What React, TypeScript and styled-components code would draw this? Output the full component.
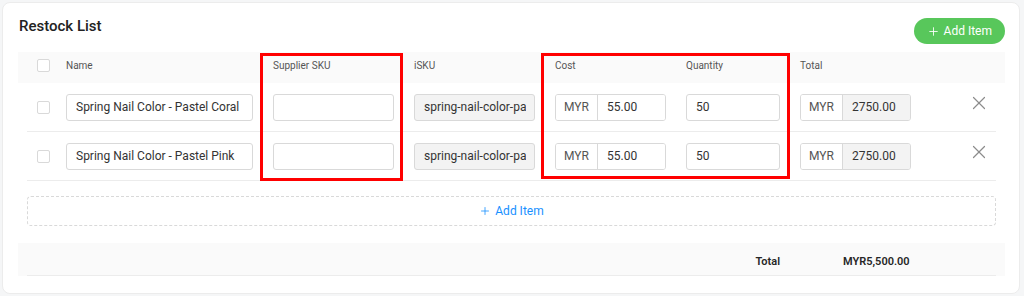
import React from 'react'
import styled, { createGlobalStyle } from 'styled-components'
import { Plus, X } from 'lucide-react'

const GlobalStyle = createGlobalStyle`
  html, body {
    margin: 0;
    padding: 0;
    background: #f5f6f7;
    font-family: Roboto, 'Liberation Sans', Arial, sans-serif;
  }
  * { box-sizing: border-box; }
`

const COLS = '29px 207px 141px 141px 131px 114px 131px 75px'

type Item = {
  name: string
  sku: string
  cost: string
  qty: string
  total: string
}

const items: Item[] = [
  { name: 'Spring Nail Color - Pastel Coral', sku: 'spring-nail-color-pastel-coral', cost: '55.00', qty: '50', total: '2750.00' },
  { name: 'Spring Nail Color - Pastel Pink', sku: 'spring-nail-color-pastel-pink', cost: '55.00', qty: '50', total: '2750.00' },
]

const App = () => (
  <>
    <GlobalStyle />
    <Card>
      <TopBar>
        <Title>Restock List</Title>
        <AddButton>
          <Plus size={13} strokeWidth={1.6} />
          Add Item
        </AddButton>
      </TopBar>

      <TableWrap>
        <HeadRow>
          <CheckCell><Check /></CheckCell>
          <HeadCell>Name</HeadCell>
          <HeadCell>Supplier SKU</HeadCell>
          <HeadCell>iSKU</HeadCell>
          <HeadCell>Cost</HeadCell>
          <HeadCell>Quantity</HeadCell>
          <HeadCell>Total</HeadCell>
          <HeadCell />
        </HeadRow>

        <Body>
          {items.map((it) => (
            <Row key={it.name}>
              <CheckCell><Check /></CheckCell>
              <Cell><Input defaultValue={it.name} /></Cell>
              <Cell><Input defaultValue="" /></Cell>
              <Cell><Input readOnly disabled value={it.sku} /></Cell>
              <Cell>
                <Group>
                  <Addon>MYR</Addon>
                  <GroupInput defaultValue={it.cost} />
                </Group>
              </Cell>
              <Cell><Input defaultValue={it.qty} /></Cell>
              <Cell>
                <Group>
                  <Addon>MYR</Addon>
                  <GroupInput readOnly disabled value={it.total} />
                </Group>
              </Cell>
              <ActionCell>
                <X size={22} strokeWidth={1.3} color="#8c8c8c" />
              </ActionCell>
            </Row>
          ))}
        </Body>

        <Highlight $left={242} $width={143} $height={128} />
        <Highlight $left={523} $width={249} $height={126} />
      </TableWrap>

      <DashedAdd>
        <Plus size={12} strokeWidth={1.6} />
        Add Item
      </DashedAdd>

      <Footer>
        <FooterGrid>
          <span />
          <span />
          <span />
          <span />
          <span />
          <FooterLabel>Total</FooterLabel>
          <FooterAmount>MYR5,500.00</FooterAmount>
          <span />
        </FooterGrid>
      </Footer>
    </Card>
  </>
)

const Card = styled.div`
  margin: 2px 4px 0 2px;
  height: 292px;
  background: #fff;
  border: 1px solid #ececec;
  border-radius: 8px;
  padding: 15px 14px 0 15px;
`

const TopBar = styled.div`
  display: flex;
  justify-content: space-between;
  align-items: flex-start;
  height: 26px;
`

const Title = styled.h1`
  margin: 0;
  font-size: 15px;
  line-height: 16px;
  font-weight: 500;
  color: #222;
  padding-left: 1px;
`

const AddButton = styled.button`
  display: flex;
  align-items: center;
  gap: 4px;
  height: 26px;
  padding: 0 13px 0 13px;
  border: none;
  border-radius: 13px;
  background: #58c75b;
  color: #fff;
  font-family: inherit;
  font-size: 12px;
  cursor: pointer;
`

const TableWrap = styled.div`
  position: relative;
  margin-top: 8px;
`

const HeadRow = styled.div`
  display: grid;
  grid-template-columns: ${COLS};
  height: 31px;
  padding: 0 9px 4px;
  align-items: center;
  background: #fafafa;
`

const HeadCell = styled.div`
  padding: 0 10px;
  font-size: 10px;
  color: #555;
`

const Body = styled.div`
  margin: 0 9px;
`

const Row = styled.div`
  display: grid;
  grid-template-columns: ${COLS};
  height: 49px;
  align-items: center;
  border-bottom: 1px solid #ececec;
`

const Cell = styled.div`
  display: flex;
  align-items: center;
  padding: 0 10px;
`

const CheckCell = styled.div`
  display: flex;
  align-items: center;
  padding-left: 10px;
`

const ActionCell = styled.div`
  align-self: start;
  display: flex;
  justify-content: flex-end;
  padding: 9px 6px 0 0;
`

const Check = styled.span`
  display: block;
  flex: 0 0 13px;
  width: 13px;
  height: 13px;
  border: 1px solid #d9d9d9;
  border-radius: 2px;
  background: #fff;
`

const Input = styled.input`
  width: 100%;
  height: 27px;
  border: 1px solid #d9d9d9;
  border-radius: 3px;
  padding: 0 8px 0 9px;
  font-family: inherit;
  font-size: 12px;
  color: #333;
  background: #fff;
  outline: none;

  &:disabled {
    background: #f3f3f3;
    color: #333;
    -webkit-text-fill-color: #333;
    opacity: 1;
  }
`

const Group = styled.div`
  display: flex;
  width: 100%;
  height: 27px;
  border: 1px solid #d9d9d9;
  border-radius: 3px;
  overflow: hidden;
`

const Addon = styled.span`
  flex: 0 0 42px;
  display: flex;
  align-items: center;
  justify-content: center;
  border-right: 1px solid #d9d9d9;
  font-size: 12px;
  color: #555;
  background: #fff;
`

const GroupInput = styled.input`
  flex: 1;
  min-width: 0;
  border: none;
  padding: 0 9px;
  font-family: inherit;
  font-size: 12px;
  color: #333;
  background: #fff;
  outline: none;

  &:disabled {
    background: #f3f3f3;
    color: #333;
    -webkit-text-fill-color: #333;
    opacity: 1;
  }
`

const Highlight = styled.div<{ $left: number; $width: number; $height: number }>`
  position: absolute;
  top: 1px;
  left: ${({ $left }) => $left}px;
  width: ${({ $width }) => $width}px;
  height: ${({ $height }) => $height}px;
  border: 3px solid #f00;
  pointer-events: none;
`

const DashedAdd = styled.div`
  display: flex;
  align-items: center;
  justify-content: center;
  gap: 4px;
  margin: 15px 9px 0;
  height: 30px;
  border: 1px dashed #d9d9d9;
  border-radius: 4px;
  color: #1890ff;
  font-size: 12px;
`

const Footer = styled.div`
  margin-top: 17px;
  background: #fafafa;
  padding: 0 9px;
`

const FooterGrid = styled.div`
  display: grid;
  grid-template-columns: ${COLS};
  height: 33px;
  padding-top: 4px;
  align-items: center;
  border-bottom: 1px solid #ececec;
  font-size: 11px;
  font-weight: 600;
  color: #262626;
`

const FooterLabel = styled.span`
  padding: 0 10px;
  text-align: right;
`

const FooterAmount = styled.span`
  padding-left: 53px;
  white-space: nowrap;
`

export default App
